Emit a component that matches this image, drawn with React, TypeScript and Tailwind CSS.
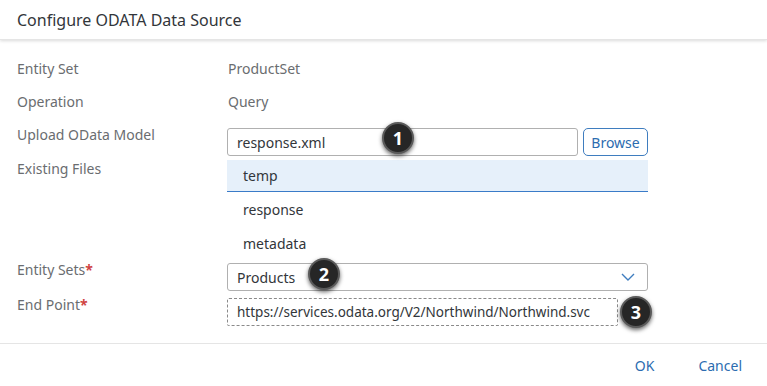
import React from 'react';

function Badge({ n, className }: { n: string; className: string }) {
  return (
    <div
      className={`absolute w-[32px] h-[32px] rounded-full bg-[#262626] border-2 border-[#5a5a5a] shadow-[0_2px_4px_rgba(0,0,0,0.6)] flex items-center justify-center text-white font-bold text-[18px] leading-none ${className}`}
    >
      {n}
    </div>
  );
}

function Label({ children, required, className = '' }: { children: React.ReactNode; required?: boolean; className?: string }) {
  return (
    <div className={`leading-[20px] text-[#6a6d70] ${className}`}>
      {children}
      {required && <span className="text-[#d04343] font-bold">*</span>}
    </div>
  );
}

export default function App() {
  return (
    <div className="w-[767px] h-[386px] bg-white flex flex-col font-['Noto_Sans',sans-serif] text-[14px] text-[#32363a] overflow-hidden">
      <div className="h-[40px] shrink-0 flex items-center px-[17px] text-[16px] shadow-[0_1px_3px_rgba(0,0,0,0.15)] border-b border-[#e5e5e5]">
        Configure ODATA Data Source
      </div>

      <div className="flex-1 pl-[17px] pt-[19px] grid grid-cols-[210px_421px] content-start">
        <Label className="h-[33px]">Entity Set</Label>
        <div className="h-[33px] leading-[20px] pl-[1px] text-[#6a6d70]">ProductSet</div>

        <Label className="h-[33px]">Operation</Label>
        <div className="h-[33px] leading-[20px] pl-[1px] text-[#6a6d70]">Query</div>

        <Label>Upload OData Model</Label>
        <div className="relative flex gap-[5px] mt-[3px]">
          <div className="w-[351px] h-[28px] border border-[#b0b0b0] rounded-[3px] px-[9px] flex items-center">
            response.xml
          </div>
          <button className="w-[65px] h-[28px] border border-[#3f7dbf] rounded-[5px] text-[#2c6cb0] flex items-center justify-center">
            Browse
          </button>
          <Badge n="1" className="left-[155px] top-[-6px]" />
        </div>

        <Label className="mt-[3px]">Existing Files</Label>
        <div className="mt-[4px]">
          <div className="h-[32px] bg-[#e6f0fa] border-b border-[#3a7bc8] pl-[16px] flex items-center">temp</div>
          <div className="h-[35px] pl-[16px] flex items-center">response</div>
          <div className="h-[32px] pl-[16px] flex items-center">metadata</div>
        </div>

        <Label required className="mt-[1px]">Entity Sets</Label>
        <div className="relative mt-[4px] h-[28px] border border-[#b0b0b0] rounded-[3px] pl-[9px] pr-[12px] flex items-center justify-between">
          <span>Products</span>
          <svg width="14" height="8" viewBox="0 0 14 8" fill="none" stroke="#3f7dbf" strokeWidth="1.4">
            <path d="M1 1l6 6 6-6" />
          </svg>
          <Badge n="2" className="left-[80px] top-[-6px]" />
        </div>

        <Label required className="mt-[4px]">End Point</Label>
        <div className="relative mt-[7px] w-[391px] h-[28px] border border-dashed border-[#8a8a8a] rounded-[2px] pl-[9px] flex items-center text-[13.5px]">
          https://services.odata.org/V2/Northwind/Northwind.svc
          <Badge n="3" className="left-[392px] top-[-3px]" />
        </div>
      </div>

      <div className="h-[43px] shrink-0 border-t border-[#e5e5e5] flex items-center justify-end pr-[25px] gap-[44px] text-[#2c6cb0] pt-[1px]">
        <span>OK</span>
        <span>Cancel</span>
      </div>
    </div>
  );
}
